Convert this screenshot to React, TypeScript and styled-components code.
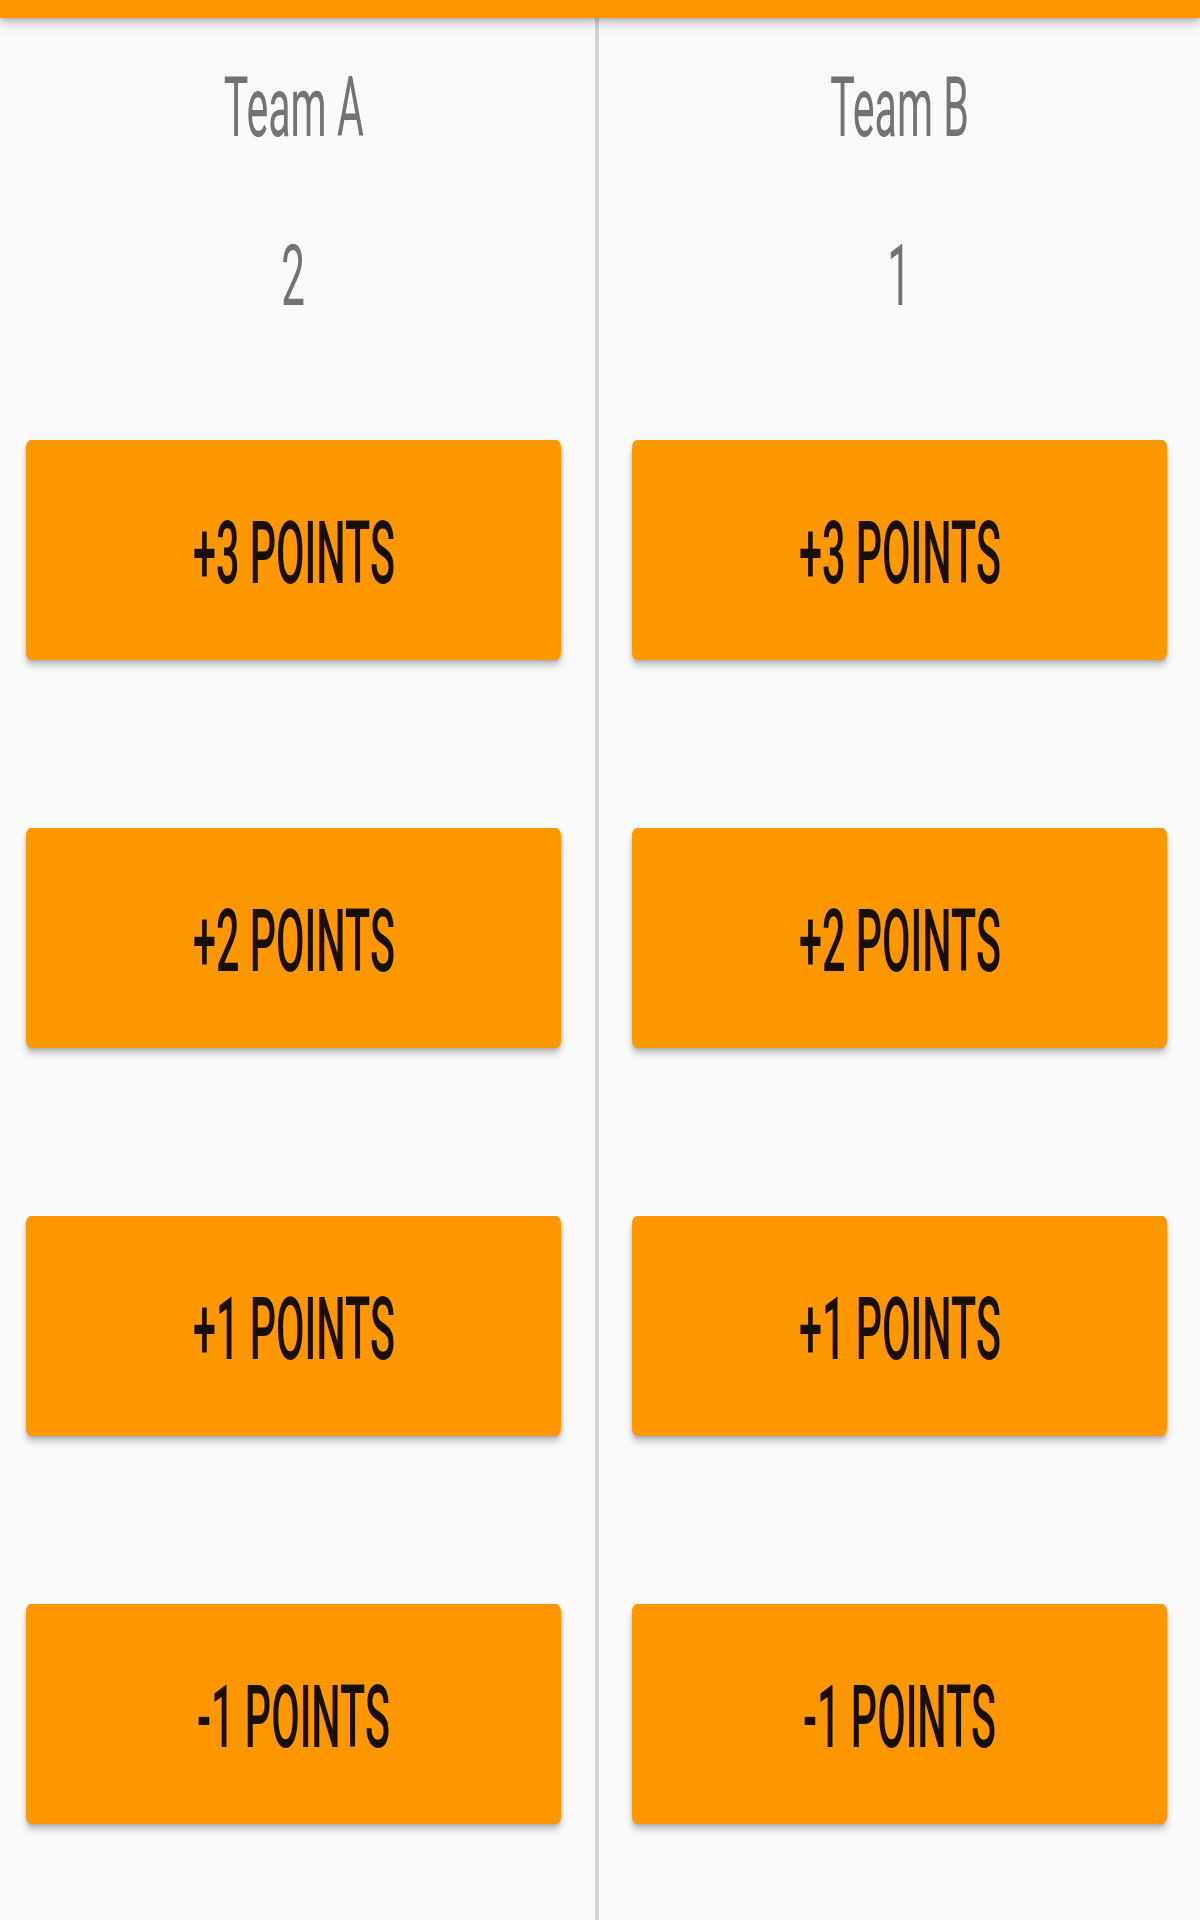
import React from "react";
import styled, { createGlobalStyle } from "styled-components";

const GlobalStyle = createGlobalStyle`
  html, body {
    margin: 0;
    padding: 0;
    background: #fafafa;
  }
  #root {
    min-height: 1920px;
  }
  * {
    box-sizing: border-box;
  }
`;

const Page = styled.div`
  display: flex;
  flex-direction: column;
  width: 1200px;
  height: 1920px;
  background: #fafafa;
  font-family: Roboto, "Noto Sans", Arial, sans-serif;
  overflow: hidden;
`;

const AppBar = styled.header`
  position: relative;
  z-index: 2;
  flex: 0 0 18px;
  background: #ff9800;
  box-shadow: 0 5px 12px rgba(0, 0, 0, 0.22), 0 2px 4px rgba(0, 0, 0, 0.12);
`;

const Board = styled.main`
  flex: 1;
  display: grid;
  grid-template-columns: 595px 4px 1fr;
`;

const Divider = styled.div`
  background: #d4d4d4;
`;

const TeamColumn = styled.section<{ $left: boolean }>`
  display: flex;
  flex-direction: column;
  align-items: stretch;
  padding: 48px ${(p) => (p.$left ? "34px" : "33px")} 0
    ${(p) => (p.$left ? "26px" : "33px")};
`;

const Label = styled.div`
  display: flex;
  justify-content: center;
  height: 84px;
  font-size: 84px;
  line-height: 84px;
  font-weight: 400;
  color: #737373;
`;

const Score = styled(Label)`
  margin-top: 84px;
  font-size: 86px;
`;

const Narrow = styled.span<{ $ratio?: number }>`
  display: inline-block;
  white-space: nowrap;
  transform: scaleX(${(p) => p.$ratio ?? 0.49});
  transform-origin: center;
`;

const Actions = styled.div`
  display: flex;
  flex-direction: column;
  gap: 168px;
  margin-top: 122px;
`;

const PointButton = styled.button`
  display: flex;
  align-items: center;
  justify-content: center;
  height: 220px;
  padding: 5px 0 0;
  border: none;
  border-radius: 5px / 8px;
  background: #ff9800;
  color: rgba(0, 0, 0, 0.9);
  font-family: Roboto, "Noto Sans", Arial, sans-serif;
  font-size: 88px;
  line-height: 88px;
  font-weight: 500;
  box-shadow: 0 6px 7px rgba(0, 0, 0, 0.2), 0 2px 3px rgba(0, 0, 0, 0.14);
  cursor: pointer;
`;

const teams = [
  { name: "Team A", score: 2 },
  { name: "Team B", score: 1 },
];

const deltas = ["+3", "+2", "+1", "-1"];

export default function App() {
  return (
    <>
      <GlobalStyle />
      <Page>
        <AppBar />
        <Board>
          {teams.map((team, i) => (
            <React.Fragment key={team.name}>
              {i === 1 && <Divider />}
              <TeamColumn $left={i === 0}>
                <Label>
                  <Narrow>{team.name}</Narrow>
                </Label>
                <Score>
                  <Narrow>{team.score}</Narrow>
                </Score>
                <Actions>
                  {deltas.map((d) => (
                    <PointButton key={d}>
                      <Narrow $ratio={0.47}>{d} POINTS</Narrow>
                    </PointButton>
                  ))}
                </Actions>
              </TeamColumn>
            </React.Fragment>
          ))}
        </Board>
      </Page>
    </>
  );
}
